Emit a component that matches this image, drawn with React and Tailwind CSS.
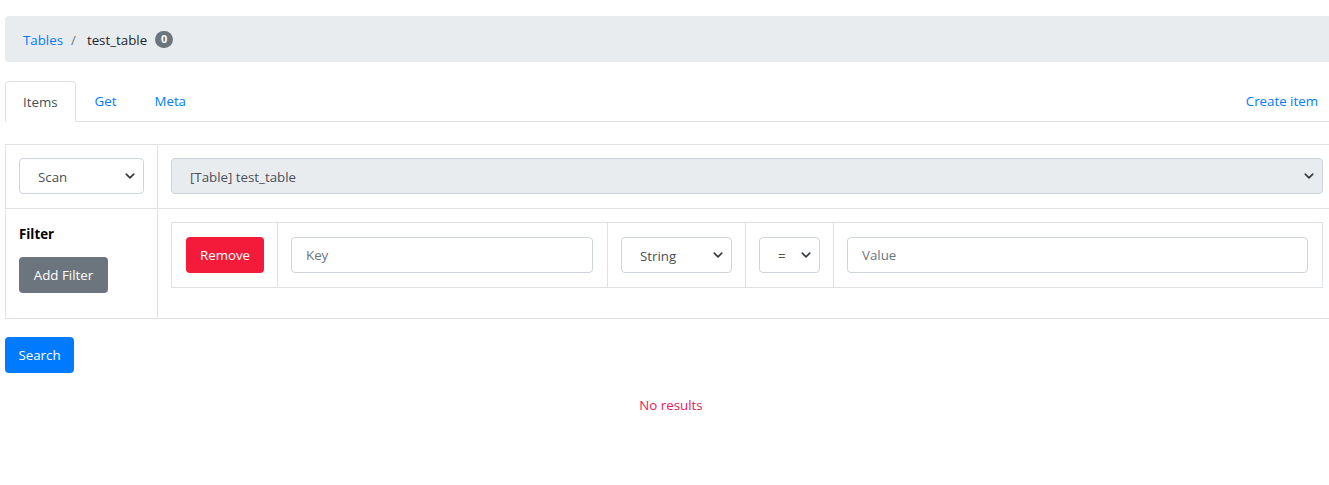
import React from 'react';

const Chevron = () => (
  <svg width="10" height="10" viewBox="0 0 16 16" className="shrink-0">
    <path d="M2 5l6 6 6-6" fill="none" stroke="#343a40" strokeWidth="2.6" strokeLinecap="round" strokeLinejoin="round" />
  </svg>
);

const Select = ({ value, className = '', disabled }) => (
  <div
    className={`flex items-center justify-between h-[36px] border border-[#ced4da] rounded-[4px] pl-[18px] pr-[8px] ${
      disabled ? 'bg-[#e9ecef] text-[#495057]' : 'bg-white text-[#495057]'
    } ${className}`}
  >
    <span className="pt-[3px]">{value}</span>
    <Chevron />
  </div>
);

const Input = ({ placeholder, className = '' }) => (
  <div className={`flex items-center h-[36px] border border-[#ced4da] rounded-[4px] px-[14px] pt-[2px] text-[#6c757d] bg-white ${className}`}>
    {placeholder}
  </div>
);

const App = () => {
  return (
    <div className="w-[1329px] h-[485px] overflow-hidden bg-white text-[13.3px] text-[#212529]" style={{ fontFamily: '"Open Sans", "Noto Sans", sans-serif' }}>
      <div className="pt-[16px] pl-[5px]">
        {/* breadcrumb */}
        <div className="w-[1340px] h-[46px] bg-[#e9ecef] rounded-[4px] flex items-center pl-[18px] pt-[3px]">
          <span className="text-[#007bff]">Tables</span>
          <span className="text-[#6c757d] pl-[8px] pr-[11px]">/</span>
          <span>test_table</span>
          <span className="ml-[8px] -mt-[2px] bg-[#6c757d] text-white text-[11px] font-bold rounded-full px-[6px] h-[17px] flex items-center">0</span>
        </div>

        {/* tabs */}
        <div className="mt-[19px] w-[1324px] flex items-end border-b border-[#dee2e6] h-[41px]">
          <div className="h-[41px] -mb-px px-[17px] pt-[2px] flex items-center border border-[#dee2e6] border-b-white rounded-t-[4px] bg-white text-[#495057]">
            Items
          </div>
          <div className="h-[41px] px-[19px] pt-[2px] flex items-center text-[#007bff]">Get</div>
          <div className="h-[41px] px-[19px] pt-[2px] flex items-center text-[#007bff]">Meta</div>
          <div className="ml-auto h-[41px] pt-[2px] flex items-center pr-[11px] text-[#007bff]">Create item</div>
        </div>

        {/* form table */}
        <div className="mt-[22px] w-[1340px] border border-[#dee2e6]">
          <div className="flex border-b border-[#dee2e6]">
            <div className="w-[152px] shrink-0 border-r border-[#dee2e6] pt-[13px] pb-[14px] px-[13px]">
              <Select value="Scan" className="w-[125px]" />
            </div>
            <div className="flex-1 pt-[13px] pb-[14px] px-[13px]">
              <Select value="[Table] test_table" disabled className="w-[1152px]" />
            </div>
          </div>
          <div className="flex">
            <div className="w-[152px] shrink-0 border-r border-[#dee2e6] pt-[17px] px-[13px] pb-[25px]">
              <div className="font-bold leading-[16px] text-black">Filter</div>
              <button className="mt-[15px] h-[36px] w-[89px] pt-[2px] rounded-[4px] bg-[#6c757d] text-white">Add Filter</button>
            </div>
            <div className="flex-1 p-[13px]">
              <div className="w-[1152px] border border-[#dee2e6] flex">
                <div className="w-[106px] shrink-0 border-r border-[#dee2e6] p-[14px]">
                  <button className="h-[36px] w-[78px] pt-[2px] rounded-[4px] bg-[#f41b3a] text-white">Remove</button>
                </div>
                <div className="w-[330px] shrink-0 border-r border-[#dee2e6] p-[14px] pl-[13px]">
                  <Input placeholder="Key" />
                </div>
                <div className="w-[138px] shrink-0 border-r border-[#dee2e6] p-[14px] pl-[13px]">
                  <Select value="String" className="w-[111px]" />
                </div>
                <div className="w-[88px] shrink-0 border-r border-[#dee2e6] p-[14px] pl-[13px]">
                  <Select value="=" className="w-[61px]" />
                </div>
                <div className="flex-1 p-[14px] pl-[13px]">
                  <Input placeholder="Value" />
                </div>
              </div>
            </div>
          </div>
        </div>

        <button className="mt-[18px] h-[36px] w-[69px] pt-[2px] rounded-[4px] bg-[#007bff] text-white">Search</button>

        <div className="mt-[23px] w-[1332px] text-center text-[#e8195a]">No results</div>
      </div>
    </div>
  );
};

export default App;
